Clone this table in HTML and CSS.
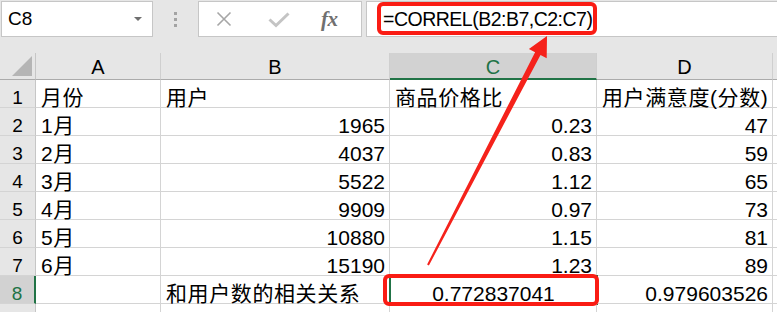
FILE: index.html
```html
<!DOCTYPE html>
<html lang="zh-CN">
<head>
<meta charset="utf-8">
<title>CORREL</title>
<link rel="stylesheet" href="styles.css">
</head>
<body>
<div class="app">
  <div class="toolbar">
    <div class="namebox"><span class="name">C8</span><span class="caret"></span></div>
    <div class="grip"><i></i><i></i><i></i></div>
    <div class="fxbox">
      <svg class="ic-x" width="16" height="16" viewBox="0 0 16 16"><path d="M1.5 1.5 L14.5 14.5 M14.5 1.5 L1.5 14.5" stroke="#a6a6a6" stroke-width="1.6" fill="none"/></svg>
      <svg class="ic-check" width="22" height="16" viewBox="0 0 22 16"><path d="M1.5 7.5 L8 13.5 L20.5 1.5" stroke="#c4c4c4" stroke-width="3" fill="none"/></svg>
      <span class="fx">fx</span>
    </div>
    <div class="formula">=CORREL(B2:B7,C2:C7)</div>
  </div>

  <div class="sheet">
    <div class="hd corner"><span class="tri"></span></div>
    <div class="hd col">A</div>
    <div class="hd col">B</div>
    <div class="hd col active">C</div>
    <div class="hd col">D</div>
    <div class="hd col"></div>

    <div class="rh">1</div>
    <div class="c cjk">月份</div>
    <div class="c cjk">用户</div>
    <div class="c cjk">商品价格比</div>
    <div class="c cjk">用户满意度(分数)</div>
    <div class="c"></div>

    <div class="rh">2</div>
    <div class="c cjk">1月</div>
    <div class="c num">1965</div>
    <div class="c num">0.23</div>
    <div class="c num">47</div>
    <div class="c"></div>

    <div class="rh">3</div>
    <div class="c cjk">2月</div>
    <div class="c num">4037</div>
    <div class="c num">0.83</div>
    <div class="c num">59</div>
    <div class="c"></div>

    <div class="rh">4</div>
    <div class="c cjk">3月</div>
    <div class="c num">5522</div>
    <div class="c num">1.12</div>
    <div class="c num">65</div>
    <div class="c"></div>

    <div class="rh">5</div>
    <div class="c cjk">4月</div>
    <div class="c num">9909</div>
    <div class="c num">0.97</div>
    <div class="c num">73</div>
    <div class="c"></div>

    <div class="rh">6</div>
    <div class="c cjk">5月</div>
    <div class="c num">10880</div>
    <div class="c num">1.15</div>
    <div class="c num">81</div>
    <div class="c"></div>

    <div class="rh">7</div>
    <div class="c cjk">6月</div>
    <div class="c num">15190</div>
    <div class="c num">1.23</div>
    <div class="c num">89</div>
    <div class="c"></div>

    <div class="rh active">8</div>
    <div class="c"></div>
    <div class="c cjk">和用户数的相关关系</div>
    <div class="c ctr sel">0.772837041</div>
    <div class="c num">0.979603526</div>
    <div class="c"></div>

    <div class="rh"></div>
    <div class="c"></div>
    <div class="c"></div>
    <div class="c"></div>
    <div class="c"></div>
    <div class="c"></div>
  </div>

  <svg class="annot" width="777" height="312" viewBox="0 0 777 312">
    <rect x="379" y="4" width="216" height="29" rx="4" ry="4" fill="none" stroke="#fa1c14" stroke-width="4"/>
    <rect x="385" y="276" width="212" height="28" rx="4" ry="4" fill="none" stroke="#fa1c14" stroke-width="4"/>
    <polygon points="427.1,264.5 535.1,52.3 528.9,49.1 547,36 546.7,58.3 540.5,55.1 428.9,265.5" fill="#f5221b"/>
  </svg>
</div>
</body>
</html>
```

FILE: styles.css
```css
* { box-sizing: border-box; }

html, body {
  margin: 0;
  padding: 0;
  background: #ffffff;
  overflow: hidden;
}

.app {
  position: relative;
  width: 777px;
  height: 312px;
  overflow: hidden;
  font-family: "Liberation Sans", "Noto Sans CJK SC", sans-serif;
  color: #000;
  background: #e6e6e6;
}

/* ---------- formula bar ---------- */
.toolbar {
  display: flex;
  align-items: flex-start;
  height: 53px;
  padding: 1px 0 0 1px;
  background: #e6e6e6;
}

.namebox {
  width: 152px;
  height: 36px;
  background: #fff;
  border: 1px solid #c6c6c6;
  display: flex;
  align-items: center;
  justify-content: space-between;
  padding: 0 10px 0 6px;
}

.name {
  font-size: 19px;
  line-height: 20px;
}

.caret {
  width: 0;
  height: 0;
  border-left: 4px solid transparent;
  border-right: 4px solid transparent;
  border-top: 4px solid #6f6f6f;
}

.grip {
  width: 45px;
  height: 36px;
  display: flex;
  flex-direction: column;
  align-items: center;
  justify-content: center;
  gap: 3px;
}

.grip i {
  display: block;
  width: 3px;
  height: 3px;
  background: #a3a3a3;
}

.fxbox {
  width: 164px;
  height: 36px;
  background: #fff;
  border: 1px solid #c6c6c6;
  display: flex;
  align-items: center;
  padding-left: 17px;
}

.ic-x { margin-right: 36px; }
.ic-check { margin-right: 31px; margin-top: 2px; }

.fx {
  font-family: "Liberation Serif", "DejaVu Serif", serif;
  font-style: italic;
  font-weight: bold;
  font-size: 21px;
  color: #707070;
  line-height: 20px;
  letter-spacing: -0.5px;
}

.formula {
  flex: 1;
  margin-left: 4px;
  height: 36px;
  background: #fff;
  border: 1px solid #c6c6c6;
  border-right: none;
  padding-left: 16px;
  font-size: 19.5px;
  line-height: 34px;
  letter-spacing: -0.5px;
  white-space: nowrap;
}

/* ---------- sheet grid ---------- */
.sheet {
  display: grid;
  grid-template-columns: 36px 125px 229px 207px 176px 1fr;
  grid-template-rows: 27px repeat(9, 28px);
  background: #fff;
}

.hd {
  background: #e6e6e6;
  border-right: 1px solid #cfcfcf;
  border-bottom: 1px solid #ababab;
}

.hd.col {
  display: flex;
  align-items: center;
  justify-content: center;
  font-size: 20px;
  line-height: 20px;
  padding-top: 2px;
}

.hd.col.active {
  background: #d2d2d2;
  color: #217346;
  border-bottom: 2px solid #217346;
}

.corner {
  position: relative;
  border-right: 1px solid #c6c6c6;
}

.tri {
  position: absolute;
  right: 3px;
  bottom: 3px;
  width: 0;
  height: 0;
  border-left: 20px solid transparent;
  border-bottom: 20px solid #b5b5b5;
}

.rh {
  background: #e6e6e6;
  border-right: 1px solid #c6c6c6;
  border-bottom: 1px solid #d4d4d4;
  display: flex;
  align-items: flex-end;
  justify-content: center;
  font-size: 19px;
  line-height: 19px;
}

.rh.active {
  background: #d2d2d2;
  color: #217346;
  border-right: 2px solid #217346;
}

.c {
  border-right: 1px solid #d4d4d4;
  border-bottom: 1px solid #d4d4d4;
  display: flex;
  align-items: flex-end;
  padding: 0 4px 0 5px;
  font-size: 21px;
  line-height: 19px;
  white-space: nowrap;
  overflow: visible;
}

.c.cjk { letter-spacing: 0.6px; }

.c.num { justify-content: flex-end; }

.c.ctr { justify-content: center; }

.c.sel {
  outline: 2px solid #217346;
  outline-offset: -1px;
}

/* ---------- annotations ---------- */
.annot {
  position: absolute;
  left: 0;
  top: 0;
  pointer-events: none;
}
```
